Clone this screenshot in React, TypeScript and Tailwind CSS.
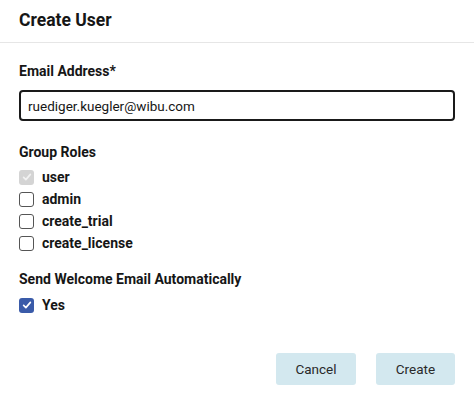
import { useState } from "react";

const ROLES = ["user", "admin", "create_trial", "create_license"];

function Box({ checked, disabled }: { checked: boolean; disabled?: boolean }) {
  if (checked) {
    return (
      <span
        className={`flex h-[15px] w-[15px] items-center justify-center rounded-[3px] ${
          disabled ? "bg-[#d4d4d4]" : "bg-[#3a5ba9]"
        }`}
      >
        <svg viewBox="0 0 16 16" className="h-[12px] w-[12px]" fill="none">
          <path
            d="M3.5 8.5l3 3 6-7"
            stroke={disabled ? "#f2f2f2" : "#fff"}
            strokeWidth="2.2"
            strokeLinecap="round"
            strokeLinejoin="round"
          />
        </svg>
      </span>
    );
  }
  return <span className="h-[15px] w-[15px] rounded-[3px] border border-[#555] bg-white" />;
}

export default function App() {
  const [roles, setRoles] = useState<Record<string, boolean>>({ user: true });
  const [welcome, setWelcome] = useState(true);

  return (
    <div className="flex h-[404px] w-[474px] flex-col bg-white font-['Roboto',sans-serif] text-[#161616]">
      {/* Header */}
      <div className="border-b border-[#e6e6e6] px-[19px] pb-[10px] pt-[8px]">
        <h2 className="text-[17.5px] font-bold leading-[24px]">Create User</h2>
      </div>

      <div className="flex flex-1 flex-col px-[19px] pt-[18px]">
        <label className="text-[14px] font-bold leading-[20px]">Email Address*</label>
        <input
          className="mt-[9px] h-[31px] w-[436px] rounded-[4px] border-2 border-[#1a1a1a] px-[7px] text-[13.5px] outline-none"
          defaultValue="ruediger.kuegler@wibu.com"
        />

        <p className="mt-[21px] text-[14px] font-bold leading-[20px]">Group Roles</p>
        <div className="mt-[5px] flex flex-col gap-[2px]">
          {ROLES.map((r) => (
            <label
              key={r}
              className="flex h-[20px] items-center gap-[8px] text-[14px] font-bold"
              onClick={() => r !== "user" && setRoles({ ...roles, [r]: !roles[r] })}
            >
              <Box checked={!!roles[r]} disabled={r === "user"} />
              <span>{r}</span>
            </label>
          ))}
        </div>

        <p className="mt-[16px] text-[14px] font-bold leading-[20px]">
          Send Welcome Email Automatically
        </p>
        <label
          className="mt-[6px] flex h-[20px] items-center gap-[8px] text-[14px] font-bold"
          onClick={() => setWelcome(!welcome)}
        >
          <Box checked={welcome} />
          <span>Yes</span>
        </label>

        <div className="mt-auto mb-[19px] flex justify-end gap-[20px]">
          <button className="h-[32px] w-[80px] rounded-[3px] bg-[#d3e8ef] text-[13.5px] text-[#2a2a2a]">
            Cancel
          </button>
          <button className="h-[32px] w-[79px] rounded-[3px] bg-[#d3e8ef] text-[13.5px] text-[#2a2a2a]">
            Create
          </button>
        </div>
      </div>
    </div>
  );
}
